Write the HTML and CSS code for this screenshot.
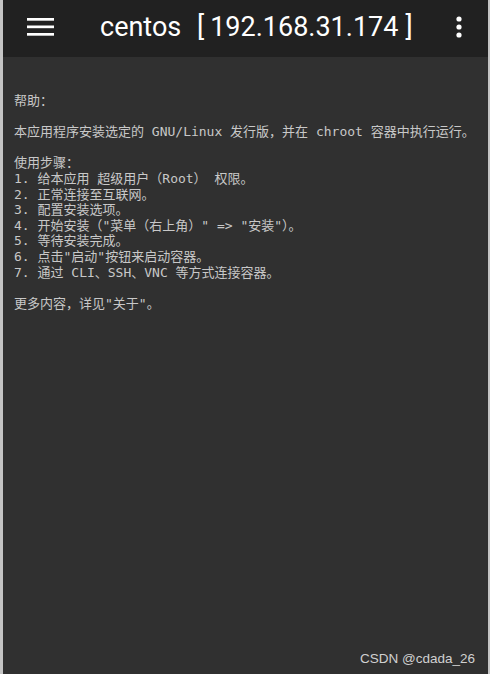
FILE: index.html
```html
<!DOCTYPE html>
<html>
  <head>
    <title>centos</title>
    <link rel="stylesheet" href="styles.css">
  </head>
  <body>
    <div class="screen">
      <div class="toolbar">
        <svg class="menu-icon" width="27" height="20" viewBox="0 0 27 20">
          <rect x="0" y="0" width="27" height="2.7" fill="#fff"/>
          <rect x="0" y="7.5" width="27" height="2.7" fill="#fff"/>
          <rect x="0" y="15" width="27" height="2.7" fill="#fff"/>
        </svg>
        <div class="title">centos <span class="bracket">[</span>192.168.31.174<span class="bracket">]</span></div>
        <svg class="more-icon" width="6" height="24" viewBox="0 0 6 24">
          <circle cx="3" cy="3" r="2.6" fill="#fff"/>
          <circle cx="3" cy="11" r="2.6" fill="#fff"/>
          <circle cx="3" cy="19" r="2.6" fill="#fff"/>
        </svg>
      </div>
      <pre class="help">帮助：

本应用程序安装选定的 GNU/Linux 发行版，并在 chroot 容器中执行运行。

使用步骤：
1. 给本应用 超级用户（Root） 权限。
2. 正常连接至互联网。
3. 配置安装选项。
4. 开始安装（"菜单（右上角）" => "安装"）。
5. 等待安装完成。
6. 点击"启动"按钮来启动容器。
7. 通过 CLI、SSH、VNC 等方式连接容器。

更多内容，详见"关于"。</pre>
    </div>
    <div class="watermark">CSDN @cdada_26</div>
  </body>
</html>
```

FILE: styles.css
```css
html, body {
  height: 100%;
}

body {
  margin: 0;
  background-color: #303030;
  font-family: Roboto, "Noto Sans CJK SC", sans-serif;
}

.screen {
  min-height: 100%;
  box-sizing: border-box;
  border-left: 3px solid #c4c4c4;
  border-right: 2px solid #c4c4c4;
  background-color: #303030;
}

.toolbar {
  display: flex;
  align-items: center;
  height: 57px;
  background-color: #212121;
}

.menu-icon {
  margin-left: 24px;
  margin-top: -2px;
}

.title {
  margin-left: 46px;
  margin-top: -3px;
  color: #fff;
  font-size: 27px;
  white-space: nowrap;
}

.bracket {
  margin: 0 6px 0 9px;
}

.bracket + .bracket {
  margin: 0 0 0 7px;
}

.more-icon {
  margin-left: auto;
  margin-right: 26px;
  margin-top: -2px;
}

.help {
  margin: 0;
  padding: 36px 0 0 11px;
  color: #c8c8c8;
  font-family: "DejaVu Sans Mono", "Noto Sans CJK SC", monospace;
  font-size: 13px;
  line-height: 15.6px;
}

.watermark {
  position: absolute;
  right: 15px;
  bottom: 8px;
  color: #d0d0d0;
  font-family: "Liberation Sans", "Noto Sans CJK SC", sans-serif;
  font-size: 13.5px;
}
```
